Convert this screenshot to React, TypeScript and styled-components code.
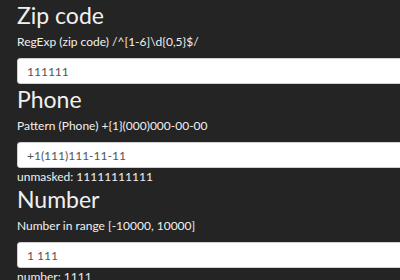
import styled, { createGlobalStyle } from "styled-components";

const GlobalStyle = createGlobalStyle`
  html, body {
    margin: 0;
    padding: 0;
    background: #242424;
    overflow: hidden;
  }
  body {
    font-family: Lato, "Noto Sans", sans-serif;
    color: #f0f0f0;
  }
`;

const Page = styled.div`
  padding: 0 0 0 17px;
  width: 480px;
`;

const Section = styled.section`
  display: flex;
  flex-direction: column;
`;

const Heading = styled.h2`
  margin: 0;
  font-size: 23px;
  font-weight: 400;
  line-height: 31px;
`;

const Caption = styled.div`
  font-size: 12px;
  line-height: 16px;
  margin: 3px 0 8px;
`;

const Field = styled.input`
  box-sizing: border-box;
  width: 100%;
  height: 26px;
  border: 1px solid #d0d0d0;
  border-radius: 3px;
  padding: 0 9px;
  font-family: Lato, "Noto Sans", sans-serif;
  font-size: 12px;
  color: #555;
  background: #fff;
  outline: none;
`;

const Result = styled.div`
  font-size: 12px;
  line-height: 14px;
  padding-top: 2px;
`;

type MaskProps = {
  title: string;
  caption: string;
  value: string;
  result?: string;
};

function MaskSection({ title, caption, value, result }: MaskProps) {
  return (
    <Section>
      <Heading>{title}</Heading>
      <Caption>{caption}</Caption>
      <Field defaultValue={value} />
      {result && <Result>{result}</Result>}
    </Section>
  );
}

export default function App() {
  return (
    <>
      <GlobalStyle />
      <Page>
        <MaskSection
          title="Zip code"
          caption="RegExp (zip code) /^[1-6]\d{0,5}$/"
          value="111111"
        />
        <MaskSection
          title="Phone"
          caption="Pattern (Phone) +{1}(000)000-00-00"
          value="+1(111)111-11-11"
          result="unmasked: 11111111111"
        />
        <MaskSection
          title="Number"
          caption="Number in range [-10000, 10000]"
          value="1 111"
          result="number: 1111"
        />
      </Page>
    </>
  );
}
